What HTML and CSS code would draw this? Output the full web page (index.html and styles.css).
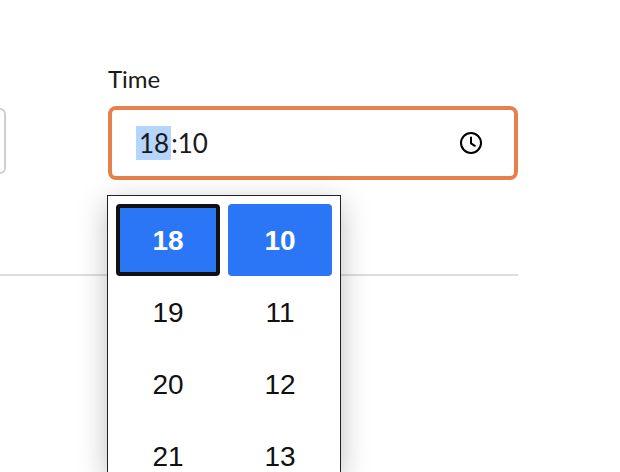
FILE: index.html
```html
<!DOCTYPE html>
<html lang="en">
<head>
  <meta charset="UTF-8" />
  <title>Time</title>
  <link rel="stylesheet" href="styles.css">
</head>
<body>
  <div class="form">
    <div class="form-row">
      <div class="date-stub"></div>
      <div class="field">
        <label class="field-label">Time</label>
        <div class="time-input">
          <span class="time-value"><span class="time-selected">18</span>:10</span>
          <svg class="clock-icon" viewBox="0 0 24 24" width="24" height="24" fill="none" stroke="#000" stroke-width="2" stroke-linecap="round" stroke-linejoin="round">
            <circle cx="12" cy="12" r="10" />
            <path d="M12 6.4V12.4L15.8 14.8" />
          </svg>

          <div class="time-popup">
            <div class="time-column">
              <div class="time-cell is-selected is-focused">18</div>
              <div class="time-cell">19</div>
              <div class="time-cell">20</div>
              <div class="time-cell">21</div>
            </div>
            <div class="time-column">
              <div class="time-cell is-selected">10</div>
              <div class="time-cell">11</div>
              <div class="time-cell">12</div>
              <div class="time-cell">13</div>
            </div>
          </div>
        </div>
      </div>
    </div>
    <hr class="divider">
  </div>
</body>
</html>
```

FILE: styles.css
```css
* {
  box-sizing: border-box;
}

html, body {
  height: 100%;
}

body {
  margin: 0;
  background: #fff;
  overflow: hidden;
  font-family: 'Lato', sans-serif;
  color: #1a1a1a;
}

.form {
  width: 518px;
  padding-top: 64px;
}

.form-row {
  display: flex;
  align-items: flex-end;
  gap: 102px;
}

/* Edge of the field that is cut off on the left */
.date-stub {
  width: 6px;
  height: 66px;
  margin-bottom: 6px;
  border: 2px solid #cfcfcf;
  border-left: none;
  border-radius: 0 6px 6px 0;
}

.field {
  flex: 1;
}

.field-label {
  display: block;
  font-size: 24px;
  line-height: 29px;
  margin-bottom: 13px;
}

.time-input {
  position: relative;
  display: flex;
  align-items: center;
  justify-content: space-between;
  height: 74px;
  padding: 0 31px 0 24px;
  border: 4px solid #e5814a;
  border-radius: 8px;
  font-size: 26px;
}

.time-selected {
  background: #b5d5fd;
  display: inline-block;
  line-height: 34px;
  padding: 0 2px 0 3px;
}

.clock-icon {
  display: block;
}

/* Runs off the bottom of the window, so no bottom border */
.time-popup {
  position: absolute;
  top: 85px;
  left: -5px;
  display: flex;
  gap: 8px;
  width: 234px;
  height: 277px;
  padding: 8px;
  overflow: hidden;
  background: #fff;
  border: 1px solid #222;
  border-bottom: none;
  box-shadow: 0 8px 28px rgba(0, 0, 0, 0.25);
  font-family: 'Liberation Sans', Arial, sans-serif;
  font-size: 28px;
  color: #111;
}

.time-column {
  flex: 1;
}

.time-cell {
  height: 72px;
  padding-top: 1px;
  display: flex;
  align-items: center;
  justify-content: center;
  border-radius: 4px;
}

.is-selected {
  background: #2b76f6;
  color: #fff;
  font-weight: bold;
}

.is-focused {
  border: 4px solid #111;
}

.divider {
  margin: 94px 0 0;
  border: none;
  border-top: 2px solid #dedede;
}
```
